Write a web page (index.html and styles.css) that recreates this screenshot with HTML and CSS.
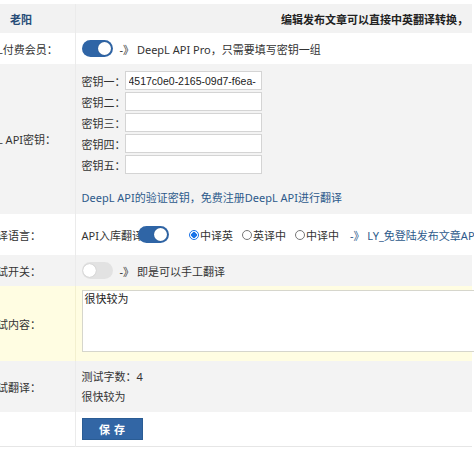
FILE: index.html
```html
<!DOCTYPE html>
<html>
<head>
<meta charset="utf-8">
<link rel="stylesheet" href="styles.css">
</head>
<body>
<table class="form">
  <colgroup><col class="c-label"><col class="c-field"></colgroup>
  <tr class="head">
    <th class="brand">老阳</th>
    <td class="notice">编辑发布文章可以直接中英翻译转换，</td>
  </tr>
  <tr class="r-white h31">
    <th>L付费会员：</th>
    <td><div class="line"><span class="switch on"><span class="knob"></span></span><span class="hint">-》 DeepL API Pro，只需要填写密钥一组</span></div></td>
  </tr>
  <tr class="r-gray">
    <th>L API密钥：</th>
    <td class="keys">
      <div class="key"><span class="key-label">密钥一：</span><input class="inp" type="text" value="4517c0e0-2165-09d7-f6ea-"></div>
      <div class="key"><span class="key-label">密钥二：</span><input class="inp" type="text"></div>
      <div class="key"><span class="key-label">密钥三：</span><input class="inp" type="text"></div>
      <div class="key"><span class="key-label">密钥四：</span><input class="inp" type="text"></div>
      <div class="key"><span class="key-label">密钥五：</span><input class="inp" type="text"></div>
      <p class="desc">DeepL API的验证密钥，免费注册DeepL API进行翻译</p>
    </td>
  </tr>
  <tr class="r-white h41">
    <th>译语言：</th>
    <td><div class="line"><span class="api">API入库翻译</span><span class="switch on"><span class="knob"></span></span>
      <span class="radios">
        <label class="radio"><span class="dot checked"></span>中译英</label>
        <label class="radio"><span class="dot"></span>英译中</label>
        <label class="radio"><span class="dot"></span>中译中</label>
      </span>
      <span class="link">-》 LY_免登陆发布文章API插件</span></div></td>
  </tr>
  <tr class="r-gray h31">
    <th>试开关：</th>
    <td><div class="line"><span class="switch off"><span class="knob"></span></span><span class="hint">-》 即是可以手工翻译</span></div></td>
  </tr>
  <tr class="r-yellow">
    <th>试内容：</th>
    <td class="area-cell"><textarea class="area">很快较为</textarea></td>
  </tr>
  <tr class="r-gray">
    <th>试翻译：</th>
    <td class="result"><div class="res-line">测试字数：4</div><div class="res-line">很快较为</div></td>
  </tr>
  <tr class="r-white h34 last">
    <th></th>
    <td><button class="save">保存</button></td>
  </tr>
</table>
</body>
</html>
```
FILE: styles.css
```css
html, body {
  margin: 0;
  padding: 0;
  overflow: hidden;
  background: #fff;
}
body {
  padding-top: 4px;
  font-family: "Noto Sans", "Noto Sans CJK SC", sans-serif;
  font-size: 11px;
  color: #333;
}
.form {
  width: 472px;
  border-collapse: collapse;
  table-layout: fixed;
}
.c-label { width: 75px; }
.form th {
  text-align: left;
  font-weight: normal;
  padding: 0;
  white-space: nowrap;
  overflow: hidden;
  text-indent: -3px;
  vertical-align: middle;
  border-right: 1px solid #ebebeb;
  color: #333;
}
.form td {
  padding: 0 0 0 6px;
  vertical-align: middle;
  white-space: nowrap;
}
.head { background: #f2f2f2; height: 29px; }
.head th.brand {
  text-indent: 0;
  padding-left: 10px;
  font-weight: bold;
  color: #274d78;
}
.head td.notice {
  text-align: right;
  padding-right: 4px;
  font-weight: bold;
  color: #222;
}
.r-white { background: #fff; }
.r-gray { background: #f3f3f3; }
.r-yellow { background: #fffde2; }
.r-yellow th { border-right-color: #f3f0cf; }
.h31 { height: 31px; }
.h34 { height: 34px; }
.h41 { height: 41px; }
.last { border-bottom: 1px solid #e6e6e6; }

.line {
  display: flex;
  align-items: center;
  height: 20px;
}
.switch {
  position: relative;
  display: inline-block;
  width: 31px;
  height: 17px;
  border-radius: 9px;
  flex: none;
}
.switch.on { background: #2f65a6; }
.switch.off { background: #e2e2e2; }
.knob {
  position: absolute;
  top: 2px;
  width: 13px;
  height: 13px;
  border-radius: 50%;
  background: #fff;
  box-shadow: 0 0 1px rgba(0,0,0,0.3);
}
.switch.on .knob { right: 2px; }
.switch.off .knob { left: 1px; }
.hint { margin-left: 7px; color: #333; }

.keys { vertical-align: top !important; padding-top: 7px !important; padding-bottom: 6px !important; }
.key {
  display: flex;
  align-items: center;
  height: 19px;
  margin-bottom: 2px;
}
.key-label { width: 43px; flex: none; overflow: visible; white-space: nowrap; }
.inp {
  box-sizing: border-box;
  width: 137px;
  height: 19px;
  margin: 0;
  padding: 0 3px;
  border: 1px solid #d4d4d4;
  background: #fff;
  font-family: "Liberation Sans", Arial, sans-serif;
  font-size: 10.5px;
  color: #222;
  outline: none;
}
.desc {
  margin: 14px 0 0;
  line-height: 20px;
  color: #2d5a8b;
}

.api { margin-right: -5px; }
.radios { display: flex; margin-left: 20px; }
.radio { display: flex; align-items: center; margin-right: 9px; }
.dot {
  box-sizing: border-box;
  width: 10px;
  height: 10px;
  border-radius: 50%;
  border: 1px solid #777;
  background: #fff;
  margin-right: 1px;
}
.dot.checked {
  border: 1px solid #1a73e8;
  background: radial-gradient(circle, #1a73e8 0 2.6px, #fff 3px);
}
.link { margin-left: 2px; color: #2d5a8b; }

.area-cell { vertical-align: top !important; padding-top: 4px !important; height: 71px; }
.area {
  display: block;
  box-sizing: border-box;
  width: 400px;
  height: 62px;
  margin: 0;
  padding: 1px 2px;
  border: 1px solid #d6d6cc;
  border-right: none;
  background: #fff;
  resize: none;
  font-family: "Noto Sans", "Noto Sans CJK SC", sans-serif;
  font-size: 11px;
  line-height: 14px;
  color: #222;
  outline: none;
}
.result { padding-top: 6px !important; padding-bottom: 5px !important; }
.res-line { line-height: 20px; }
.save {
  display: block;
  width: 61px;
  height: 22px;
  margin: 0;
  padding: 0;
  border: 1px solid #2a5c94;
  background: #3266a5;
  color: #fff;
  font-family: "Noto Sans CJK SC", sans-serif;
  font-weight: bold;
  font-size: 11px;
  letter-spacing: 4px;
  text-indent: 4px;
}
```
